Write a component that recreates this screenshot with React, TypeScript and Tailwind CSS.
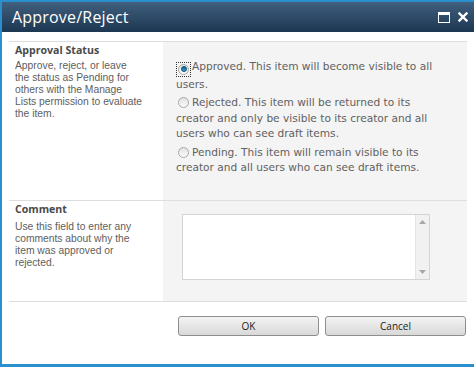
import React from "react";

const Radio = ({ checked }: { checked?: boolean }) => (
  <span
    className={
      "inline-flex items-center justify-center align-[-2px] mr-[1px] p-[2px] " +
      (checked ? "outline outline-1 outline-dotted outline-[#333] -outline-offset-1" : "")
    }
  >
    <span className="w-[11px] h-[11px] rounded-full border border-[#a8a8a8] bg-gradient-to-b from-[#e2e2e2] to-[#fbfbfb] flex items-center justify-center">
      {checked && <span className="w-[6px] h-[6px] rounded-full bg-gradient-to-b from-[#0f5f8f] to-[#3aa0d8] border border-[#0b4c73]" />}
    </span>
  </span>
);

export default function App() {
  const side = "font-['Open_Sans',sans-serif]";
  const desc = "font-['Liberation_Sans',Arial,sans-serif]";
  const body = "font-['DejaVu_Sans',Verdana,sans-serif]";
  return (
    <div className="w-[474px] h-[367px] border-l-2 border-t-2 border-b-[3px] border-[#2a8fce] bg-white flex flex-col overflow-hidden">
      <div className="h-[30px] shrink-0 bg-gradient-to-b from-[#40607e] to-[#1d3752] flex items-center justify-between pl-[10px] pr-[6px]">
        <span className={`${side} text-white text-[16px] tracking-[0.2px]`}>Approve/Reject</span>
        <div className="flex items-center gap-[8px]">
          <svg width="12" height="11" viewBox="0 0 12 11">
            <rect x="0.5" y="0.5" width="11" height="10" fill="none" stroke="#fff" />
            <rect x="0.5" y="0.5" width="11" height="2.5" fill="#fff" />
          </svg>
          <svg width="10" height="10" viewBox="0 0 10 10">
            <path d="M1.5 1.5 L8.5 8.5 M8.5 1.5 L1.5 8.5" stroke="#fff" strokeWidth="2.4" strokeLinecap="square" />
          </svg>
        </div>
      </div>

      <div className="flex-1 flex flex-col px-[7px] pt-[9px]">
        <div className="border-t border-[#dedede] flex h-[159px]">
          <div className={`w-[154px] shrink-0 pl-[6px] pt-[1px] ${desc} text-[#5e5e5e]`}>
            <div className={`${side} font-bold text-[10.6px] leading-[14px] text-[#4a4a4a]`}>Approval Status</div>
            <div className="mt-[3px] text-[10.3px] leading-[12px] whitespace-nowrap">
              Approve, reject, or leave<br />
              the status as Pending for<br />
              others with the Manage<br />
              Lists permission to evaluate<br />
              the item.
            </div>
          </div>
          <div className={`flex-1 bg-[#f4f4f4] pl-[13px] pr-[18px] pt-[17px] ${body} text-[#616161] text-[10.6px] leading-[15.6px]`}>
            <div>
              <Radio checked />
              Approved. This item will become visible to all users.
            </div>
            <div className="mt-[3px]">
              <Radio />
              Rejected. This item will be returned to its creator and only be visible to its creator and all users who can see draft items.
            </div>
            <div className="mt-[3px]">
              <Radio />
              Pending. This item will remain visible to its creator and all users who can see draft items.
            </div>
          </div>
        </div>

        <div className="border-t border-[#dedede] flex h-[101px]">
          <div className={`w-[154px] shrink-0 pl-[6px] pt-[1px] ${desc} text-[#5e5e5e]`}>
            <div className={`${side} font-bold text-[10.6px] leading-[14px] text-[#4a4a4a]`}>Comment</div>
            <div className="mt-[5px] text-[10.3px] leading-[12px] whitespace-nowrap">
              Use this field to enter any<br />
              comments about why the<br />
              item was approved or<br />
              rejected.
            </div>
          </div>
          <div className="flex-1 bg-[#f4f4f4] pl-[19px] pt-[13px]">
            <div className="w-[248px] h-[66px] bg-white border border-[#d4d4d4] flex justify-end">
              <div className="w-[14px] h-full bg-[#f1f1f1] border-l border-[#e4e4e4] flex flex-col items-center justify-between py-[5px]">
                <svg width="7" height="4" viewBox="0 0 7 4"><path d="M0 4 L3.5 0 L7 4 Z" fill="#a8a8a8" /></svg>
                <svg width="7" height="4" viewBox="0 0 7 4"><path d="M0 0 L3.5 4 L7 0 Z" fill="#a8a8a8" /></svg>
              </div>
            </div>
          </div>
        </div>

        <div className="border-t border-[#dedede] flex justify-end gap-[6px] pt-[14px] pr-[1px]">
          <button className={`w-[141px] h-[20px] rounded-[3px] border border-[#8e8e8e] bg-gradient-to-b from-[#f4f4f4] to-[#d9d9d9] ${side} text-[10px] text-[#222]`}>OK</button>
          <button className={`w-[141px] h-[20px] rounded-[3px] border border-[#8e8e8e] bg-gradient-to-b from-[#f4f4f4] to-[#d9d9d9] ${side} text-[10px] text-[#222]`}>Cancel</button>
        </div>
      </div>
    </div>
  );
}
